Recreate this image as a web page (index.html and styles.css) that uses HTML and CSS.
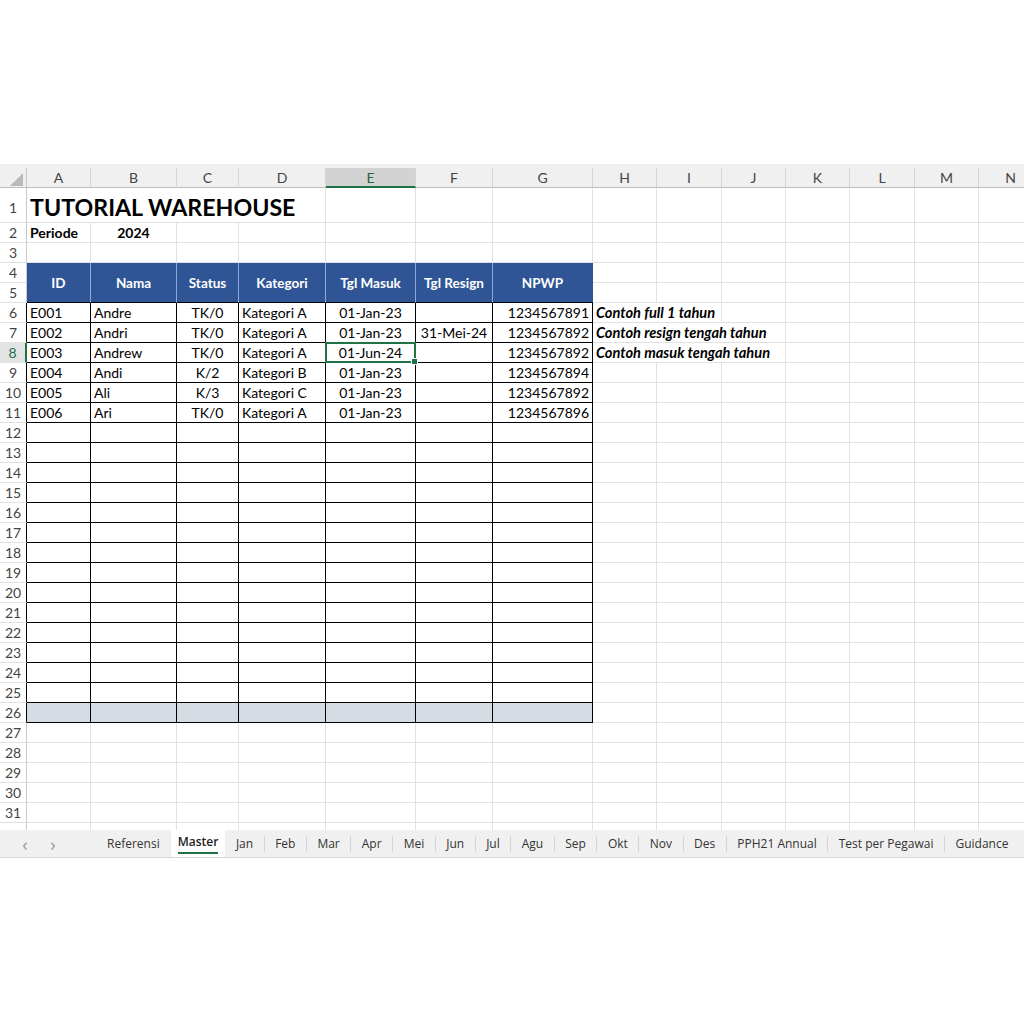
FILE: index.html
```html
<!DOCTYPE html>
<html lang="id">
<head>
<meta charset="utf-8">
<title>Master - Tutorial Warehouse</title>
<link rel="stylesheet" href="styles.css">
</head>
<body>
<div class="page">
  <div class="topband"></div>
  <div class="sheet">
    <div class="grid">
      <span class="corner"><svg width="27" height="20" viewBox="0 0 27 20"><polygon points="23,5 23,18 10,18" fill="#b9b9b9"/></svg></span>
      <span class="ch">A</span><span class="ch">B</span><span class="ch">C</span><span class="ch">D</span><span class="ch ch-sel">E</span><span class="ch">F</span><span class="ch">G</span><span class="ch">H</span><span class="ch">I</span><span class="ch">J</span><span class="ch">K</span><span class="ch">L</span><span class="ch">M</span><span class="ch">N</span>

      <span class="rh r1">1</span>
      <span class="title">TUTORIAL WAREHOUSE</span>
      <span></span><span></span><span></span><span></span><span></span>
      <span></span><span></span><span></span><span></span><span></span>

      <span class="rh">2</span>
      <span class="bold">Periode</span><span class="bold center">2024</span>
      <span></span><span></span><span></span><span></span>
      <span></span><span></span><span></span><span></span>
      <span></span><span></span><span></span><span></span>

      <span class="rh">3</span>
      <span></span><span></span><span></span><span></span><span></span><span></span><span></span>
      <span></span><span></span><span></span><span></span><span></span><span></span><span></span>

      <span class="rh">4</span>
      <span class="hd">ID</span><span class="hd">Nama</span><span class="hd">Status</span><span class="hd">Kategori</span><span class="hd">Tgl Masuk</span><span class="hd">Tgl Resign</span><span class="hd hd-last">NPWP</span>
      <span></span><span></span><span></span><span></span><span></span><span></span><span></span>

      <span class="rh">5</span>
      <span></span><span></span><span></span><span></span><span></span><span></span><span></span>

      <span class="rh rt">6</span>
      <span class="t">E001</span><span class="t">Andre</span><span class="t center">TK/0</span><span class="t">Kategori A</span><span class="t center">01-Jan-23</span><span class="t"></span><span class="t right">1234567891</span>
      <span class="note span2">Contoh full 1 tahun</span>
      <span></span><span></span><span></span><span></span><span></span>

      <span class="rh rt">7</span>
      <span class="t">E002</span><span class="t">Andri</span><span class="t center">TK/0</span><span class="t">Kategori A</span><span class="t center">01-Jan-23</span><span class="t center">31-Mei-24</span><span class="t right">1234567892</span>
      <span class="note span3">Contoh resign tengah tahun</span>
      <span></span><span></span><span></span><span></span>

      <span class="rh rt rh-sel">8</span>
      <span class="t">E003</span><span class="t">Andrew</span><span class="t center">TK/0</span><span class="t">Kategori A</span><span class="t center cell-sel">01-Jun-24<i class="sel"></i></span><span class="t"></span><span class="t right">1234567892</span>
      <span class="note span3">Contoh masuk tengah tahun</span>
      <span></span><span></span><span></span><span></span>

      <span class="rh rt">9</span>
      <span class="t">E004</span><span class="t">Andi</span><span class="t center">K/2</span><span class="t">Kategori B</span><span class="t center">01-Jan-23</span><span class="t"></span><span class="t right">1234567894</span>
      <span></span><span></span><span></span><span></span><span></span><span></span><span></span>

      <span class="rh rt">10</span>
      <span class="t">E005</span><span class="t">Ali</span><span class="t center">K/3</span><span class="t">Kategori C</span><span class="t center">01-Jan-23</span><span class="t"></span><span class="t right">1234567892</span>
      <span></span><span></span><span></span><span></span><span></span><span></span><span></span>

      <span class="rh rt">11</span>
      <span class="t">E006</span><span class="t">Ari</span><span class="t center">TK/0</span><span class="t">Kategori A</span><span class="t center">01-Jan-23</span><span class="t"></span><span class="t right">1234567896</span>
      <span></span><span></span><span></span><span></span><span></span><span></span><span></span>

      <span class="rh rt">12</span>
      <span class="t"></span><span class="t"></span><span class="t"></span><span class="t"></span><span class="t"></span><span class="t"></span><span class="t"></span>
      <span></span><span></span><span></span><span></span><span></span><span></span><span></span>
      <span class="rh rt">13</span>
      <span class="t"></span><span class="t"></span><span class="t"></span><span class="t"></span><span class="t"></span><span class="t"></span><span class="t"></span>
      <span></span><span></span><span></span><span></span><span></span><span></span><span></span>
      <span class="rh rt">14</span>
      <span class="t"></span><span class="t"></span><span class="t"></span><span class="t"></span><span class="t"></span><span class="t"></span><span class="t"></span>
      <span></span><span></span><span></span><span></span><span></span><span></span><span></span>
      <span class="rh rt">15</span>
      <span class="t"></span><span class="t"></span><span class="t"></span><span class="t"></span><span class="t"></span><span class="t"></span><span class="t"></span>
      <span></span><span></span><span></span><span></span><span></span><span></span><span></span>
      <span class="rh rt">16</span>
      <span class="t"></span><span class="t"></span><span class="t"></span><span class="t"></span><span class="t"></span><span class="t"></span><span class="t"></span>
      <span></span><span></span><span></span><span></span><span></span><span></span><span></span>
      <span class="rh rt">17</span>
      <span class="t"></span><span class="t"></span><span class="t"></span><span class="t"></span><span class="t"></span><span class="t"></span><span class="t"></span>
      <span></span><span></span><span></span><span></span><span></span><span></span><span></span>
      <span class="rh rt">18</span>
      <span class="t"></span><span class="t"></span><span class="t"></span><span class="t"></span><span class="t"></span><span class="t"></span><span class="t"></span>
      <span></span><span></span><span></span><span></span><span></span><span></span><span></span>
      <span class="rh rt">19</span>
      <span class="t"></span><span class="t"></span><span class="t"></span><span class="t"></span><span class="t"></span><span class="t"></span><span class="t"></span>
      <span></span><span></span><span></span><span></span><span></span><span></span><span></span>
      <span class="rh rt">20</span>
      <span class="t"></span><span class="t"></span><span class="t"></span><span class="t"></span><span class="t"></span><span class="t"></span><span class="t"></span>
      <span></span><span></span><span></span><span></span><span></span><span></span><span></span>
      <span class="rh rt">21</span>
      <span class="t"></span><span class="t"></span><span class="t"></span><span class="t"></span><span class="t"></span><span class="t"></span><span class="t"></span>
      <span></span><span></span><span></span><span></span><span></span><span></span><span></span>
      <span class="rh rt">22</span>
      <span class="t"></span><span class="t"></span><span class="t"></span><span class="t"></span><span class="t"></span><span class="t"></span><span class="t"></span>
      <span></span><span></span><span></span><span></span><span></span><span></span><span></span>
      <span class="rh rt">23</span>
      <span class="t"></span><span class="t"></span><span class="t"></span><span class="t"></span><span class="t"></span><span class="t"></span><span class="t"></span>
      <span></span><span></span><span></span><span></span><span></span><span></span><span></span>
      <span class="rh rt">24</span>
      <span class="t"></span><span class="t"></span><span class="t"></span><span class="t"></span><span class="t"></span><span class="t"></span><span class="t"></span>
      <span></span><span></span><span></span><span></span><span></span><span></span><span></span>
      <span class="rh rt">25</span>
      <span class="t"></span><span class="t"></span><span class="t"></span><span class="t"></span><span class="t"></span><span class="t"></span><span class="t"></span>
      <span></span><span></span><span></span><span></span><span></span><span></span><span></span>
      <span class="rh rt">26</span>
      <span class="t tot"></span><span class="t tot"></span><span class="t tot"></span><span class="t tot"></span><span class="t tot"></span><span class="t tot"></span><span class="t tot"></span>
      <span></span><span></span><span></span><span></span><span></span><span></span><span></span>

      <span class="rh">27</span>
      <span></span><span></span><span></span><span></span><span></span><span></span><span></span>
      <span></span><span></span><span></span><span></span><span></span><span></span><span></span>
      <span class="rh">28</span>
      <span></span><span></span><span></span><span></span><span></span><span></span><span></span>
      <span></span><span></span><span></span><span></span><span></span><span></span><span></span>
      <span class="rh">29</span>
      <span></span><span></span><span></span><span></span><span></span><span></span><span></span>
      <span></span><span></span><span></span><span></span><span></span><span></span><span></span>
      <span class="rh">30</span>
      <span></span><span></span><span></span><span></span><span></span><span></span><span></span>
      <span></span><span></span><span></span><span></span><span></span><span></span><span></span>
      <span class="rh">31</span>
      <span></span><span></span><span></span><span></span><span></span><span></span><span></span>
      <span></span><span></span><span></span><span></span><span></span><span></span><span></span>
      <span class="rh"></span>
      <span></span><span></span><span></span><span></span><span></span><span></span><span></span>
      <span></span><span></span><span></span><span></span><span></span><span></span><span></span>
    </div>
  </div>
  <div class="tabs">
    <div class="nav"><span class="arrow">&#8249;</span><span class="arrow">&#8250;</span></div>
    <div class="tab">Referensi</div>
    <div class="tab active"><span class="tab-label">Master</span></div>
    <div class="tab">Jan</div>
    <div class="tab">Feb</div>
    <div class="tab">Mar</div>
    <div class="tab">Apr</div>
    <div class="tab">Mei</div>
    <div class="tab">Jun</div>
    <div class="tab">Jul</div>
    <div class="tab">Agu</div>
    <div class="tab">Sep</div>
    <div class="tab">Okt</div>
    <div class="tab">Nov</div>
    <div class="tab">Des</div>
    <div class="tab">PPH21 Annual</div>
    <div class="tab">Test per Pegawai</div>
    <div class="tab">Guidance</div>
  </div>
</div>
</body>
</html>
```
FILE: styles.css
```css
* { box-sizing: border-box; margin: 0; padding: 0; }
html, body { background: #fff; }
body {
  margin: 0;
  font-family: Lato, "Liberation Sans", sans-serif;
  color: #000;
}
.page { padding-top: 164px; width: 1024px; overflow: hidden; }
.topband { height: 4px; background: #f0f0f0; }
.sheet { width: 1024px; height: 662px; overflow: hidden; background: #fff; }
.grid {
  display: grid;
  grid-template-columns: 27px 64px 86px 62px 87px 90px 77px 100px 64px 65px 64px 64px 65px 64px 64px;
  grid-template-rows: 20px 35px;
  grid-auto-rows: 20px;
  width: 1043px;
}
.grid > span {
  display: block;
  border-right: 1px solid #e1e1e1;
  border-bottom: 1px solid #e1e1e1;
  font-size: 14px;
  line-height: 19px;
  padding: 0 3px;
  white-space: nowrap;
}
.grid > .corner { background: #f0f0f0; padding: 0; border-right: 1px solid #c8c8c8; border-bottom: 1px solid #bdbdbd; }
.corner svg { display: block; }
.grid > .ch {
  background: #f0f0f0;
  color: #444;
  text-align: center;
  border-right: 1px solid #d6d6d6;
  border-bottom: 1px solid #bdbdbd;
  line-height: 20px;
}
.grid > .ch-sel { background: #d3d3d3; color: #2b5e40; border-bottom: 2px solid #1e7145; }
.grid > .rh {
  grid-column: 1;
  background: #fff;
  color: #444;
  text-align: center;
  padding: 0;
  border-right: 1px solid #c8c8c8;
  border-bottom: 1px solid #e1e1e1;
  line-height: 20px;
}
.grid > .r1 { line-height: 40px; }
.grid > .rt { border-right-color: #000; }
.grid > .rh-sel { background: #e3e3e3; color: #1e7145; border-right: 2px solid #1e7145; }
.grid > .title {
  grid-column: span 4;
  font-weight: 700;
  font-size: 23.2px;
  line-height: 38px;
  padding-left: 3px;
}
.bold { font-weight: 700; font-size: 13.5px; }
.center { text-align: center; }
.right { text-align: right; }
.grid > .hd {
  grid-row: span 2;
  background: #2f5597;
  color: #fff;
  font-weight: 700;
  font-size: 13.5px;
  text-align: center;
  line-height: 40px;
  border-right: 1px solid #8eaadb;
  border-bottom: 1px solid #000;
}
.grid > .hd-last { border-right-color: #2f5597; }
.grid > .t { border-right-color: #000; border-bottom-color: #000; }
.grid > .tot { background: #d6dce4; }
.grid > .note { font-weight: 700; font-style: italic; font-size: 14.6px; }
.span2 { grid-column: span 2; }
.span3 { grid-column: span 3; }
.grid > .cell-sel { position: relative; }
.sel {
  position: absolute;
  left: -1px; top: -1px; right: -1px; bottom: -1px;
  border: 2px solid #217346;
}
.sel::after {
  content: "";
  position: absolute;
  right: -4px; bottom: -4px;
  width: 5px; height: 5px;
  background: #217346;
  border: 1px solid #fff;
}
.tabs {
  height: 28px;
  width: 1024px;
  overflow: hidden;
  background: #f0f0f0;
  border-bottom: 1px solid #d6d6d6;
  display: flex;
  align-items: center;
  font-family: "Open Sans", "Noto Sans", sans-serif;
  font-size: 12px;
  color: #333;
}
.nav { flex: 0 0 96px; display: flex; padding-left: 19px; gap: 16px; color: #9a9a9a; font-size: 18px; line-height: 20px; }
.arrow { width: 12px; text-align: center; }
.tab {
  flex: 0 0 auto;
  padding: 0 10.5px;
  border-left: 1px solid #d4d4d4;
  line-height: 16px;
  white-space: nowrap;
}
.tab:nth-child(2) { border-left: none; padding-left: 11px; padding-right: 10px; }
.tab.active {
  background: #fff;
  align-self: stretch;
  margin-top: -2px;
  border-left: 1px solid #f0f0f0;
  border-radius: 4px 4px 0 0;
  display: flex;
  align-items: center;
  padding: 0 7px;
  font-weight: 600;
  color: #222;
}
.tab.active + .tab { border-left: none; }
.tab-label { border-bottom: 2px solid #217346; padding-bottom: 2px; margin-top: 2px; }
```
